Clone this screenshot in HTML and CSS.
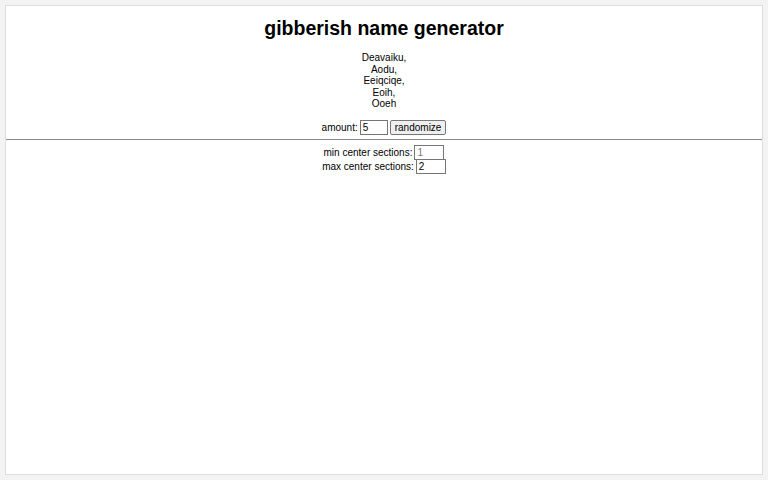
FILE: index.html
```html
<!DOCTYPE html>
<html lang="en">
<head>
    <meta charset="UTF-8">
    <meta name="viewport" content="width=device-width, initial-scale=1.0">
    <title>gibberish name generator</title>
    <link rel="stylesheet" href="styles.css">
</head>
<body>
    <div class="page">
        <h1 class="title">gibberish name generator</h1>

        <div class="names">
            <div>Deavaiku,</div>
            <div>Aodu,</div>
            <div>Eeiqciqe,</div>
            <div>Eoih,</div>
            <div>Ooeh</div>
        </div>

        <div class="controls">
            <label class="field">amount:<input class="num-input" type="text" value="5"></label>
            <button class="btn">randomize</button>
        </div>

        <hr class="divider">

        <div class="settings">
            <label class="field">min center sections:<input class="num-input wide" type="text" placeholder="1"></label>
            <label class="field">max center sections:<input class="num-input wide" type="text" value="2"></label>
        </div>
    </div>
</body>
</html>
```

FILE: styles.css
```css
* {
    box-sizing: border-box;
}

body {
    margin: 0;
    padding: 5px;
    background: #f3f3f3;
    font-family: 'Liberation Sans', Arial, sans-serif;
    font-size: 10px;
    color: #000;
}

.page {
    height: 470px;
    background: #fff;
    border: 1px solid #dcdcdc;
    display: flex;
    flex-direction: column;
    align-items: center;
}

.title {
    font-size: 19.5px;
    line-height: 23px;
    font-weight: bold;
    margin: 11px 0 0;
}

.names {
    margin-top: 12px;
    text-align: center;
    line-height: 11.5px;
}

.controls {
    margin-top: 10px;
    display: flex;
    align-items: center;
    gap: 2px;
}

.field {
    display: flex;
    align-items: center;
    gap: 2px;
}

.num-input {
    width: 28px;
    height: 15px;
    padding: 0 2px;
    border: 1px solid #767676;
    font-family: inherit;
    font-size: 10px;
}

.num-input.wide {
    width: 30px;
}

.num-input::placeholder {
    color: #777;
}

.btn {
    height: 15px;
    padding: 0 4px;
    font-family: inherit;
    font-size: 10px;
    background: #efefef;
    border: 1px solid #767676;
    border-radius: 2px;
}

.divider {
    align-self: stretch;
    margin: 4px 0 6px;
    border: 0;
    border-top: 1px solid #8a8a8a;
}

.settings {
    display: flex;
    flex-direction: column;
    align-items: center;
}

.settings .field {
    height: 14px;
}
```
